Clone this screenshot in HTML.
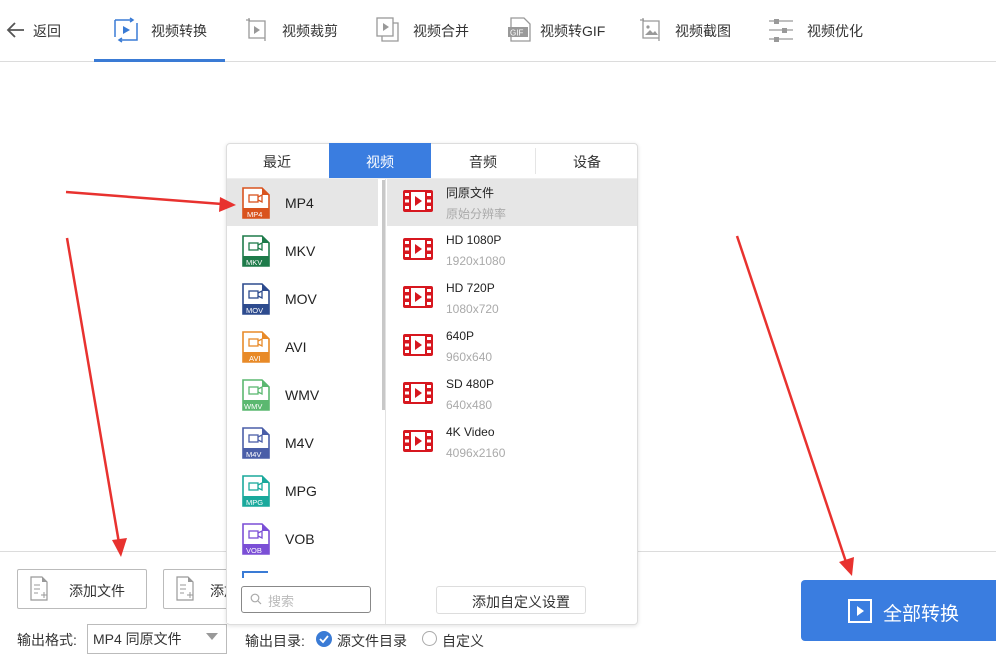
<!DOCTYPE html>
<html><head><meta charset="utf-8"><style>
*{margin:0;padding:0;box-sizing:border-box}
body{width:996px;height:646px;overflow:hidden;background:#fff;font-family:"Liberation Sans","Noto Sans CJK SC",sans-serif;color:#333;position:relative;font-size:14px}
.a{position:absolute}
.nav{font-size:14px;color:#333;top:21px}
.fi{position:absolute;left:242px;width:28px;height:32px}
.fl{position:absolute;left:285px;font-size:14px;color:#222}
.ri{position:absolute;left:403px;width:30px;height:22px}
.rt{position:absolute;left:446px;font-size:12px;color:#222}
.rs{position:absolute;left:446px;font-size:12px;color:#aaa}
</style></head><body>
<!-- top nav -->
<div class="a" style="left:0;top:61px;width:996px;height:1px;background:#dcdcdc"></div>
<div class="a" style="left:94px;top:59px;width:131px;height:3px;background:#3a7bd5"></div>
<svg class="a" style="left:6px;top:21px" width="20" height="18"><path d="M18 9H2M9 2L2 9l7 7" stroke="#555" stroke-width="1.8" fill="none"/></svg>
<div class="a nav" style="left:33px">返回</div>
<svg class="a" style="left:113px;top:16px" width="26" height="28"><path d="M2 4h17M17 2l3 2-3 2" stroke="#3a7bd5" stroke-width="1.5" fill="none"/><path d="M2 4v17M24 7v17H7M9 22l-3 2 3 2" stroke="#3a7bd5" stroke-width="1.5" fill="none"/><path d="M10 10l7 4-7 4z" fill="#3a7bd5"/></svg>
<div class="a nav" style="left:151px">视频转换</div>
<svg class="a" style="left:245px;top:17px" width="24" height="26"><path d="M1 3h4M4 1v20h16M20 21v3M4 4h16v17" stroke="#999" stroke-width="1.3" fill="none"/><path d="M9 9l6 4-6 4z" fill="#999"/></svg>
<div class="a nav" style="left:282px">视频裁剪</div>
<svg class="a" style="left:376px;top:17px" width="24" height="26"><rect x="1" y="1" width="16" height="18" stroke="#999" stroke-width="1.3" fill="none"/><path d="M17 6h5v18H6v-5" stroke="#999" stroke-width="1.3" fill="none"/><path d="M7 6l6 4-6 4z" fill="#999"/></svg>
<div class="a nav" style="left:413px">视频合并</div>
<svg class="a" style="left:507px;top:17px" width="26" height="26"><path d="M4 1h13l6 6v17H4z" stroke="#999" stroke-width="1.3" fill="none"/><rect x="1" y="10" width="20" height="10" fill="#999"/><text x="3" y="18.5" font-size="8" fill="#fff" font-family="Liberation Sans">GIF</text></svg>
<div class="a nav" style="left:540px">视频转GIF</div>
<svg class="a" style="left:639px;top:17px" width="24" height="26"><path d="M1 3h4M4 1v20h16M20 21v3M4 4h16v17" stroke="#999" stroke-width="1.3" fill="none"/><circle cx="9" cy="10" r="1.6" fill="#999"/><path d="M6 18l5-5 3 3 2-2 3 4z" fill="#999"/></svg>
<div class="a nav" style="left:675px">视频截图</div>
<svg class="a" style="left:768px;top:18px" width="26" height="24"><path d="M1 3h24M1 12h24M1 21h24" stroke="#999" stroke-width="1.2"/><rect x="6" y="1" width="5" height="5" fill="#999"/><rect x="14" y="10" width="5" height="5" fill="#999"/><rect x="6" y="19" width="5" height="5" fill="#999"/></svg>
<div class="a nav" style="left:807px">视频优化</div>

<!-- bottom area -->
<div class="a" style="left:0;top:551px;width:996px;height:1px;background:#dcdcdc"></div>
<div class="a" style="left:17px;top:569px;width:130px;height:40px;border:1px solid #bbb;border-radius:2px"></div>
<svg class="a" style="left:30px;top:576px" width="20" height="26"><path d="M1 1h11l5 5v18H1z" stroke="#999" stroke-width="1.2" fill="none"/><path d="M12 1v5h5" fill="#999"/><path d="M4 9h6M4 13h6M4 17h4M11 19h6M14 16v6" stroke="#999" stroke-width="1"/></svg>
<div class="a" style="left:69px;top:581px;font-size:14px">添加文件</div>
<div class="a" style="left:163px;top:569px;width:80px;height:40px;border:1px solid #bbb;border-radius:2px"></div>
<svg class="a" style="left:176px;top:576px" width="20" height="26"><path d="M1 1h11l5 5v18H1z" stroke="#999" stroke-width="1.2" fill="none"/><path d="M12 1v5h5" fill="#999"/><path d="M4 9h6M4 13h6M4 17h4M11 19h6M14 16v6" stroke="#999" stroke-width="1"/></svg>
<div class="a" style="left:210px;top:581px;font-size:14px">添加</div>
<div class="a" style="left:17px;top:630px;font-size:14px">输出格式:</div>
<div class="a" style="left:87px;top:624px;width:140px;height:30px;border:1px solid #bbb"></div>
<div class="a" style="left:93px;top:629px;font-size:14px">MP4 同原文件</div>
<div class="a" style="left:206px;top:633px;width:0;height:0;border-left:6px solid transparent;border-right:6px solid transparent;border-top:7px solid #999"></div>
<div class="a" style="left:245px;top:631px;font-size:14px">输出目录:</div>
<div class="a" style="left:316px;top:631px;width:16px;height:16px;border-radius:50%;background:#3a7bd5"></div>
<svg class="a" style="left:316px;top:631px" width="16" height="16"><path d="M4 8l3 3 5-6" stroke="#fff" stroke-width="1.8" fill="none"/></svg>
<div class="a" style="left:337px;top:631px;font-size:14px">源文件目录</div>
<div class="a" style="left:422px;top:631px;width:15px;height:15px;border-radius:50%;border:1px solid #aaa"></div>
<div class="a" style="left:442px;top:631px;font-size:14px">自定义</div>
<div class="a" style="left:801px;top:580px;width:200px;height:61px;background:#3a7de0;border-radius:4px"></div>
<svg class="a" style="left:848px;top:599px" width="24" height="24"><rect x="1" y="1" width="22" height="22" stroke="#fff" stroke-width="2" fill="none"/><path d="M9 7l7 5-7 5z" fill="#fff"/></svg>
<div class="a" style="left:883px;top:599px;font-size:19px;color:#fff">全部转换</div>

<!-- panel -->
<div class="a" style="left:226px;top:143px;width:412px;height:482px;background:#fff;border:1px solid #ddd;border-radius:4px;box-shadow:0 1px 4px rgba(0,0,0,.12)"></div>
<div class="a" style="left:329px;top:143px;width:102px;height:35px;background:#3a7de0"></div>
<div class="a" style="left:227px;top:178px;width:410px;height:1px;background:#eee"></div>
<div class="a" style="left:535px;top:148px;width:1px;height:26px;background:#e5e5e5"></div>
<div class="a" style="left:263px;top:152px;font-size:14px">最近</div>
<div class="a" style="left:366px;top:152px;font-size:14px;color:#fff">视频</div>
<div class="a" style="left:469px;top:152px;font-size:14px">音频</div>
<div class="a" style="left:573px;top:152px;font-size:14px">设备</div>
<div class="a" style="left:227px;top:179px;width:151px;height:47px;background:#e6e6e6"></div>
<div class="a" style="left:387px;top:179px;width:250px;height:47px;background:#e6e6e6"></div>
<div class="a" style="left:385px;top:179px;width:1px;height:445px;background:#e2e2e2"></div>
<div class="a" style="left:382px;top:180px;width:3px;height:230px;background:#c8c8c8"></div>

<!-- file icons -->
<svg width="0" height="0" style="position:absolute"><defs>
<symbol id="doc" viewBox="0 0 28 32"><path d="M1 1h19l7 7v23H1z" stroke="currentColor" stroke-width="1.6" fill="#fff"/><path d="M20 1v7h7z" fill="currentColor"/><rect x="1" y="21" width="26" height="10" fill="currentColor"/><rect x="7" y="8" width="9" height="7" stroke="currentColor" stroke-width="1.3" fill="none"/><path d="M16 10l4-2v7l-4-2" stroke="currentColor" stroke-width="1.3" fill="none"/></symbol>
<symbol id="film" viewBox="0 0 30 22"><rect x="0" y="0" width="30" height="22" rx="2" fill="#d7171f"/><rect x="8" y="2" width="14" height="18" fill="#fff"/><rect x="2" y="3" width="4" height="3" fill="#fff"/><rect x="2" y="9.5" width="4" height="3" fill="#fff"/><rect x="2" y="16" width="4" height="3" fill="#fff"/><rect x="24" y="3" width="4" height="3" fill="#fff"/><rect x="24" y="9.5" width="4" height="3" fill="#fff"/><rect x="24" y="16" width="4" height="3" fill="#fff"/><path d="M12 6l7 5-7 5z" fill="#d7171f"/></symbol>
</defs></svg>

<svg class="fi" style="top:187px;color:#d9531e"><use href="#doc"/><text x="5" y="30" font-size="7.5" fill="#fff" font-family="Liberation Sans">MP4</text></svg>
<div class="fl" style="top:195px">MP4</div>
<svg class="fi" style="top:235px;color:#1e7b4a"><use href="#doc"/><text x="4" y="30" font-size="7.5" fill="#fff" font-family="Liberation Sans">MKV</text></svg>
<div class="fl" style="top:243px">MKV</div>
<svg class="fi" style="top:283px;color:#2d4b8e"><use href="#doc"/><text x="4" y="30" font-size="7.5" fill="#fff" font-family="Liberation Sans">MOV</text></svg>
<div class="fl" style="top:291px">MOV</div>
<svg class="fi" style="top:331px;color:#e88a28"><use href="#doc"/><text x="7" y="30" font-size="7.5" fill="#fff" font-family="Liberation Sans">AVI</text></svg>
<div class="fl" style="top:339px">AVI</div>
<svg class="fi" style="top:379px;color:#5bb870"><use href="#doc"/><text x="2" y="30" font-size="7.5" fill="#fff" font-family="Liberation Sans">WMV</text></svg>
<div class="fl" style="top:387px">WMV</div>
<svg class="fi" style="top:427px;color:#4a5ea8"><use href="#doc"/><text x="4" y="30" font-size="7.5" fill="#fff" font-family="Liberation Sans">M4V</text></svg>
<div class="fl" style="top:435px">M4V</div>
<svg class="fi" style="top:475px;color:#1aa99c"><use href="#doc"/><text x="4" y="30" font-size="7.5" fill="#fff" font-family="Liberation Sans">MPG</text></svg>
<div class="fl" style="top:483px">MPG</div>
<svg class="fi" style="top:523px;color:#7b4fd6"><use href="#doc"/><text x="4" y="30" font-size="7.5" fill="#fff" font-family="Liberation Sans">VOB</text></svg>
<div class="fl" style="top:531px">VOB</div>
<div class="a" style="left:242px;top:571px;width:26px;height:8px;border-top:2px solid #3a7bd5;border-left:2px solid #3a7bd5"></div>
<div class="a" style="left:227px;top:578px;width:157px;height:45px;background:#fff"></div>
<div class="a" style="left:241px;top:586px;width:130px;height:27px;border:1px solid #888;border-radius:3px"></div>
<svg class="a" style="left:250px;top:593px" width="12" height="12"><circle cx="5" cy="5" r="3.8" stroke="#aaa" stroke-width="1.2" fill="none"/><path d="M8 8l3 3" stroke="#aaa" stroke-width="1.2"/></svg>
<div class="a" style="left:268px;top:591px;font-size:13px;color:#bbb">搜索</div>

<!-- right list -->
<svg class="ri" style="top:190px"><use href="#film"/></svg>
<div class="rt" style="top:184px">同原文件</div><div class="rs" style="top:205px">原始分辨率</div>
<svg class="ri" style="top:238px"><use href="#film"/></svg>
<div class="rt" style="top:233px">HD 1080P</div><div class="rs" style="top:254px">1920x1080</div>
<svg class="ri" style="top:286px"><use href="#film"/></svg>
<div class="rt" style="top:281px">HD 720P</div><div class="rs" style="top:302px">1080x720</div>
<svg class="ri" style="top:334px"><use href="#film"/></svg>
<div class="rt" style="top:329px">640P</div><div class="rs" style="top:350px">960x640</div>
<svg class="ri" style="top:382px"><use href="#film"/></svg>
<div class="rt" style="top:377px">SD 480P</div><div class="rs" style="top:398px">640x480</div>
<svg class="ri" style="top:430px"><use href="#film"/></svg>
<div class="rt" style="top:425px">4K Video</div><div class="rs" style="top:446px">4096x2160</div>
<div class="a" style="left:436px;top:586px;width:150px;height:28px;border:1px solid #ddd;border-radius:3px"></div>
<div class="a" style="left:472px;top:592px;font-size:14px">添加自定义设置</div>

<!-- arrows -->
<svg class="a" style="left:0;top:0" width="996" height="646">
<g stroke="#e8322f" stroke-width="2.5" fill="#e8322f">
<line x1="66" y1="192" x2="222" y2="204"/>
<polygon points="236,205 220,197 219,212" stroke="none"/>
<line x1="67" y1="238" x2="119" y2="543"/>
<polygon points="121,557 112,540 127,538" stroke="none"/>
<line x1="737" y1="236" x2="846" y2="562"/>
<polygon points="852,576 839,562 854,557" stroke="none"/>
</g></svg>
</body></html>
